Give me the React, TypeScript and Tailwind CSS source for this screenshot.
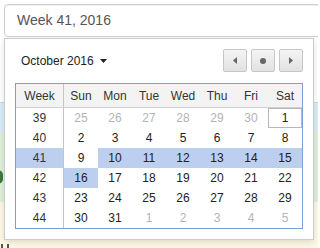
import React from "react";

type Cell = { d: number; muted?: boolean; hl?: boolean; today?: boolean };

const rows: { w: number; hl?: boolean; days: Cell[] }[] = [
  {
    w: 39,
    days: [
      { d: 25, muted: true },
      { d: 26, muted: true },
      { d: 27, muted: true },
      { d: 28, muted: true },
      { d: 29, muted: true },
      { d: 30, muted: true },
      { d: 1, today: true },
    ],
  },
  { w: 40, days: [2, 3, 4, 5, 6, 7, 8].map((d) => ({ d })) },
  {
    w: 41,
    hl: true,
    days: [
      { d: 9 },
      { d: 10, hl: true },
      { d: 11, hl: true },
      { d: 12, hl: true },
      { d: 13, hl: true },
      { d: 14, hl: true },
      { d: 15, hl: true },
    ],
  },
  {
    w: 42,
    days: [{ d: 16, hl: true }, ...[17, 18, 19, 20, 21, 22].map((d) => ({ d }))],
  },
  { w: 43, days: [23, 24, 25, 26, 27, 28, 29].map((d) => ({ d })) },
  {
    w: 44,
    days: [
      { d: 30 },
      { d: 31 },
      { d: 1, muted: true },
      { d: 2, muted: true },
      { d: 3, muted: true },
      { d: 4, muted: true },
      { d: 5, muted: true },
    ],
  },
];

const heads = ["Sun", "Mon", "Tue", "Wed", "Thu", "Fri", "Sat"];

function NavButton({ children }: { children: React.ReactNode }) {
  return (
    <div className="w-[24px] h-[23px] flex items-center justify-center border border-[#c6c6c6] rounded-[2px] bg-gradient-to-b from-[#f4f4f4] to-[#e2e2e2]">
      {children}
    </div>
  );
}

export default function App() {
  return (
    <div
      className="relative w-[318px] h-[248px] overflow-hidden bg-white text-[#333]"
      style={{ fontFamily: '"Liberation Sans", Arial, sans-serif' }}
    >
      {/* input */}
      <div className="pt-[4px] pl-[4px]">
        <div className="w-[340px] h-[33px] border border-[#cfcfcf] rounded-[4px] flex items-center pl-[12px] text-[14px] text-[#555] shadow-[inset_0_1px_1px_rgba(0,0,0,0.075)]">
          Week 41, 2016
        </div>
      </div>

      {/* background page content */}
      <div className="h-[65px]" />
      <div className="h-[31px] bg-[#d9edf7] border-t border-[#bcdcec]" />
      <div className="relative h-[69px] bg-[#dff0d8]">
        <div className="absolute left-[-7px] top-[37px] w-[10px] h-[14px] rounded-full bg-[#3c763d]" />
      </div>
      <div className="relative h-[60px] bg-[#fcf8e3]">
        <div className="absolute left-[1px] top-[42px] w-[2px] h-[6px] bg-[#555]" />
        <div className="absolute left-[7px] top-[42px] w-[2px] h-[6px] bg-[#555]" />
      </div>

      {/* popup */}
      <div className="absolute left-[4px] top-[38px] w-[310px] h-[202px] bg-white border border-[#cccccc] shadow-[0_2px_6px_rgba(0,0,0,0.12)] px-[10px] pt-[10px]">
        <div className="flex items-center justify-between h-[23px]">
          <div className="flex items-center pl-[6px] text-[12px] text-[#222]">
            <span>October 2016</span>
            <svg width="7" height="4" viewBox="0 0 7 4" className="ml-[6px]">
              <path d="M0 0 L7 0 L3.5 4 Z" fill="#222" />
            </svg>
          </div>
          <div className="flex gap-[4px]">
            <NavButton>
              <svg width="4" height="7" viewBox="0 0 4 7">
                <path d="M4 0 L4 7 L0 3.5 Z" fill="#666" />
              </svg>
            </NavButton>
            <NavButton>
              <div className="w-[6px] h-[6px] rounded-full bg-[#666]" />
            </NavButton>
            <NavButton>
              <svg width="4" height="7" viewBox="0 0 4 7">
                <path d="M0 0 L0 7 L4 3.5 Z" fill="#666" />
              </svg>
            </NavButton>
          </div>
        </div>

        <div className="mt-[11px] w-[288px] border border-[#7c9fd3] text-[12px]">
          <div className="flex h-[24px] bg-[#f3f3f3] border-b border-[#d0d0d0] text-[#333]">
            <div className="w-[48px] border-r border-[#c4c4c4] flex items-center justify-center">
              Week
            </div>
            {heads.map((h) => (
              <div key={h} className="w-[34px] flex items-center justify-center">
                {h}
              </div>
            ))}
          </div>
          {rows.map((r) => (
            <div key={r.w} className="flex h-[20px]">
              <div
                className={
                  "w-[48px] border-r border-[#c4c4c4] flex items-center justify-center " +
                  (r.hl ? "bg-[#bccfee]" : "")
                }
              >
                {r.w}
              </div>
              {r.days.map((c, i) => (
                <div
                  key={i}
                  className={
                    "w-[34px] flex items-center justify-center " +
                    (c.hl ? "bg-[#bccfee] " : "") +
                    (c.muted ? "text-[#b4b4b4] " : "text-[#222] ") +
                    (c.today ? "border border-[#b8b8b8]" : "")
                  }
                >
                  {c.d}
                </div>
              ))}
            </div>
          ))}
        </div>
      </div>
    </div>
  );
}
